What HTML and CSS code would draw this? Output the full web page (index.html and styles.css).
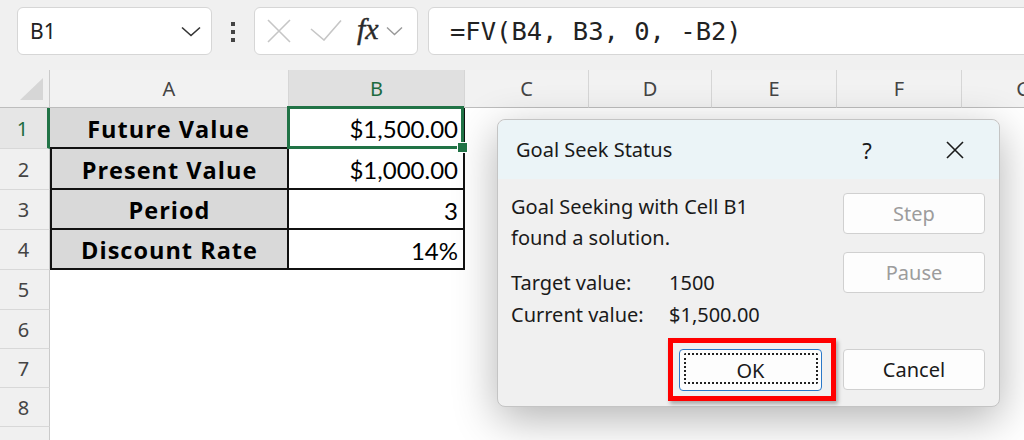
FILE: index.html
```html
<!DOCTYPE html>
<html lang="en">
<head>
    <meta charset="UTF-8">
    <title>Goal Seek Status</title>
    <link rel="stylesheet" href="styles.css">
</head>
<body>
    <!-- name box + formula bar -->
    <div class="toolbar">
        <div class="name-box">
            <span>B1</span>
            <svg width="20" height="11" viewBox="0 0 20 11"><polyline points="1,1.5 10,9.5 19,1.5" fill="none" stroke="#333" stroke-width="1.6"/></svg>
        </div>
        <div class="more"><i></i><i></i><i></i></div>
        <div class="fx-box">
            <svg class="cancel-icon" width="24" height="24" viewBox="0 0 24 24"><path d="M1 1L23 23M23 1L1 23" stroke="#c6c6c6" stroke-width="1.6"/></svg>
            <svg class="enter-icon" width="32" height="22" viewBox="0 0 32 22"><polyline points="1,10 14,21 31,1.5" fill="none" stroke="#c6c6c6" stroke-width="1.6"/></svg>
            <span class="fx">fx</span>
            <svg width="17" height="10" viewBox="0 0 17 10"><polyline points="1,1.5 8.5,8.5 16,1.5" fill="none" stroke="#999" stroke-width="1.4"/></svg>
        </div>
        <div class="formula">=FV(B4, B3, 0, -B2)</div>
    </div>

    <!-- worksheet -->
    <div class="sheet">
        <div class="corner"></div>
        <div class="col-head">A</div>
        <div class="col-head active">B</div>
        <div class="col-head">C</div>
        <div class="col-head">D</div>
        <div class="col-head">E</div>
        <div class="col-head">F</div>
        <div class="col-head">G</div>

        <div class="row-head active">1</div>
        <div class="cell label">Future Value</div>
        <div class="cell value selected">$1,500.00</div>

        <div class="row-head">2</div>
        <div class="cell label">Present Value</div>
        <div class="cell value">$1,000.00</div>

        <div class="row-head">3</div>
        <div class="cell label">Period</div>
        <div class="cell value">3</div>

        <div class="row-head">4</div>
        <div class="cell label">Discount Rate</div>
        <div class="cell value">14%</div>

        <div class="row-head">5</div>
        <div class="row-head">6</div>
        <div class="row-head">7</div>
        <div class="row-head">8</div>
        <div class="row-head"></div>
    </div>

    <!-- goal seek dialog -->
    <div class="dialog">
        <div class="dlg-title">
            <span>Goal Seek Status</span>
            <span class="help">?</span>
            <span class="close">
                <svg width="18" height="18" viewBox="0 0 18 18"><path d="M1 1L17 17M17 1L1 17" stroke="#1a1a1a" stroke-width="1.6"/></svg>
            </span>
        </div>
        <div class="dlg-body">
            <div class="dlg-info">
                <p>Goal Seeking with Cell B1<br>found a solution.</p>
                <dl class="values">
                    <dt>Target value:</dt><dd>1500</dd>
                    <dt>Current value:</dt><dd>$1,500.00</dd>
                </dl>
            </div>
            <div class="side-buttons">
                <button class="btn disabled">Step</button>
                <button class="btn disabled">Pause</button>
            </div>
            <button class="btn ok">OK</button>
            <button class="btn">Cancel</button>
        </div>
    </div>
</body>
</html>
```

FILE: styles.css
```css
* {
    margin: 0;
    padding: 0;
    box-sizing: border-box;
}

body {
    width: 1024px;
    height: 440px;
    overflow: hidden;
    position: relative;
    background: #fff;
    font-family: 'Noto Sans', 'Open Sans', sans-serif;
    color: #1a1a1a;
}

/* ---------- formula bar ---------- */

.toolbar {
    height: 70px;
    background: #f0f0f0;
    display: flex;
    align-items: flex-start;
    padding: 7px 0 0 17px;
}

.name-box {
    width: 195px;
    height: 48px;
    background: #fff;
    border: 1px solid #d6d6d6;
    border-radius: 6px;
    display: flex;
    align-items: center;
    justify-content: space-between;
    padding: 0 10px 0 12px;
    font-size: 21px;
    color: #222;
}

.more {
    width: 42px;
    display: flex;
    flex-direction: column;
    align-items: center;
    gap: 4px;
    padding-top: 15px;
}

.more i {
    width: 4px;
    height: 4px;
    background: #444;
}

.fx-box {
    width: 164px;
    height: 48px;
    background: #fff;
    border: 1px solid #d6d6d6;
    border-radius: 6px;
    display: flex;
    align-items: center;
    padding-left: 12px;
}

.enter-icon {
    margin-left: 19px;
    margin-top: -2px;
}

.fx {
    font-family: 'Liberation Serif', serif;
    font-style: italic;
    font-size: 30px;
    color: #2a2a2a;
    margin-left: 15px;
    margin-top: -4px;
    -webkit-text-stroke: 0.4px #2a2a2a;
}

.fx + svg {
    margin-left: 7px;
}

.formula {
    flex: 1;
    margin: 0 -30px 0 10px;
    height: 48px;
    background: #fff;
    border: 1px solid #d6d6d6;
    border-radius: 6px;
    display: flex;
    align-items: center;
    padding-left: 21px;
    font-family: 'DejaVu Sans Mono', monospace;
    font-size: 25.5px;
    color: #222;
}

/* ---------- worksheet grid ---------- */

.sheet {
    display: grid;
    grid-template-columns: 50px 239px 176px 124px 123px 125px 125px 124px;
    grid-template-rows: 38px 41px 41px 40px 40px 40px 39px 39px 39px 39px;
}

.corner {
    position: relative;
    background: #f0f0f0;
    border-right: 1px solid #cacaca;
    border-bottom: 1px solid #bdbdbd;
}

.corner::after {
    content: '';
    position: absolute;
    right: 6px;
    bottom: 7px;
    border-left: 23px solid transparent;
    border-bottom: 22px solid #d6d6d6;
}

.col-head {
    background: #f2f2f2;
    border-right: 1px solid #d6d6d6;
    border-bottom: 1px solid #bdbdbd;
    display: flex;
    align-items: center;
    justify-content: center;
    font-size: 20px;
    color: #444;
}

.col-head.active {
    background: #e0e0e0;
    color: #1d6b3f;
}

.row-head {
    grid-column: 1;
    background: #f0f0f0;
    border-right: 1px solid #cacaca;
    border-bottom: 1px solid #d8d8d8;
    display: flex;
    align-items: center;
    justify-content: center;
    font-size: 20px;
    color: #444;
    padding-right: 2px;
}

.row-head.active {
    background: #e6e6e6;
    border-right: 3px solid #217346;
    color: #1d6b3f;
}

.cell {
    font-family: 'Lato', 'Liberation Sans', sans-serif;
    font-size: 24px;
    display: flex;
    align-items: center;
    border-bottom: 2px solid #111;
    border-right: 2px solid #111;
    color: #000;
}

.cell.label {
    background: #d9d9d9;
    font-family: 'Open Sans', 'Noto Sans', sans-serif;
    font-size: 23.5px;
    font-weight: bold;
    letter-spacing: 1px;
    justify-content: center;
    border-left: 2px solid #111;
    padding-top: 2px;
}

.row-head.active + .label {
    border-left: none;
}

.cell.value {
    justify-content: flex-end;
    padding-right: 5px;
    padding-top: 2px;
}

.cell.selected {
    position: relative;
}

.cell.selected::after {
    content: '';
    position: absolute;
    top: -2px;
    left: -2px;
    right: -1px;
    bottom: -2px;
    border: 3px solid #217346;
}

.cell.selected::before {
    content: '';
    position: absolute;
    right: -5px;
    bottom: -6px;
    width: 9px;
    height: 9px;
    background: #217346;
    border: 1px solid #fff;
    z-index: 1;
}

/* ---------- dialog ---------- */

.dialog {
    position: absolute;
    left: 497px;
    top: 119px;
    width: 503px;
    height: 288px;
    background: #f0f0f0;
    border: 1px solid #c4c4c4;
    border-radius: 8px;
    box-shadow: 0 12px 44px rgba(0,0,0,0.3);
}

.dlg-title {
    height: 59px;
    background: #ebf4f7;
    border-radius: 8px 8px 0 0;
    display: flex;
    align-items: center;
    padding-left: 18px;
    font-size: 20px;
}

.help {
    margin-left: auto;
    width: 30px;
    margin-right: 50px;
    text-align: center;
    font-size: 22px;
}

.close {
    width: 46px;
    margin-right: 21px;
    display: flex;
    justify-content: center;
}

.dlg-body {
    display: grid;
    grid-template-columns: 1fr 142px;
    grid-template-rows: 138px 42px;
    column-gap: 21px;
    row-gap: 18px;
    padding: 14px 14px 0 13px;
    font-size: 20px;
}

.dlg-info p {
    line-height: 31px;
    margin-top: -2px;
}

.values {
    display: grid;
    grid-template-columns: 158px auto;
    line-height: 32px;
    margin-top: 14px;
}

.side-buttons {
    display: flex;
    flex-direction: column;
    gap: 18px;
}

.btn {
    height: 41px;
    background: #fdfdfd;
    border: 1px solid #d0d0d0;
    border-radius: 4px;
    font-family: inherit;
    font-size: 20px;
    color: #1a1a1a;
}

.btn.disabled {
    color: #9c9c9c;
}

.btn.ok {
    position: relative;
    width: 143px;
    height: 42px;
    justify-self: end;
    border: 1.5px solid #2a78c8;
}

/* keyboard focus ring */
.btn.ok::before {
    content: '';
    position: absolute;
    top: 3px;
    left: 4px;
    right: 3px;
    bottom: 6px;
    border: 2px dotted #222;
    border-radius: 2px;
}

/* red call-out box round the OK button */
.btn.ok::after {
    content: '';
    position: absolute;
    top: -12px;
    left: -12px;
    right: -15px;
    bottom: -11px;
    border: 5px solid #f00;
    box-shadow: 2px 3px 4px rgba(0,0,0,0.3);
}
```
